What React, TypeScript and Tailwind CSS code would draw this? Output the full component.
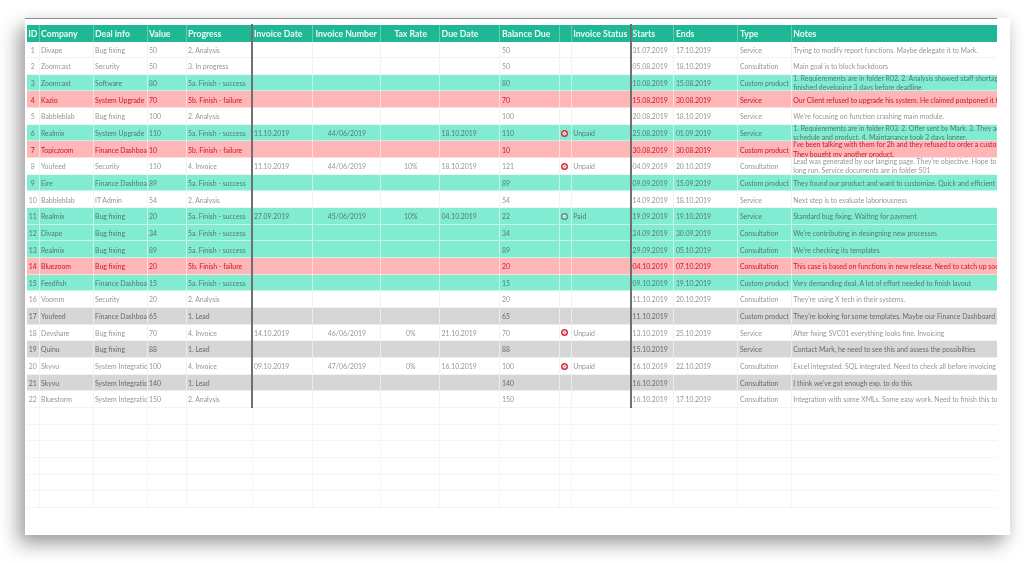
const gridCols =
  'grid grid-cols-[12.5px_54px_54px_39px_66px_60px_68.3px_59.3px_60.3px_60px_11.4px_59.3px_43.3px_64px_53.4px_205.6px]';

type Tone = 'white' | 'green' | 'red' | 'gray';

type Deal = {
  id: number;
  company: string;
  info: string;
  value: number;
  progress: string;
  invDate?: string;
  invNo?: string;
  tax?: string;
  due?: string;
  balance: number;
  status?: 'Unpaid' | 'Paid';
  starts: string;
  ends?: string;
  type: string;
  notes: string;
  notes2?: string;
  tone: Tone;
};

const deals: Deal[] = [
  { id: 1, company: 'Divape', info: 'Bug fixing', value: 50, progress: '2. Analysis', balance: 50, starts: '31.07.2019', ends: '17.10.2019', type: 'Service', notes: 'Trying to modify report functions. Maybe delegate it to Mark.', tone: 'white' },
  { id: 2, company: 'Zoomcast', info: 'Security', value: 50, progress: '3. In progress', balance: 50, starts: '05.08.2019', ends: '18.10.2019', type: 'Consultation', notes: 'Main goal is to block backdoors', tone: 'white' },
  { id: 3, company: 'Zoomcast', info: 'Software', value: 80, progress: '5a. Finish - success', balance: 80, starts: '10.08.2019', ends: '15.08.2019', type: 'Custom product', notes: '1. Requierements are in folder R02. 2. Analysis showed staff shortage. 3. We', notes2: 'finished developing 3 days before deadline', tone: 'green' },
  { id: 4, company: 'Kazio', info: 'System Upgrade', value: 70, progress: '5b. Finish - failure', balance: 70, starts: '15.08.2019', ends: '30.08.2019', type: 'Service', notes: 'Our Client refused to upgrade his system. He claimed postponed it till next year', tone: 'red' },
  { id: 5, company: 'Babbleblab', info: 'Bug fixing', value: 100, progress: '2. Analysis', balance: 100, starts: '20.08.2019', ends: '18.10.2019', type: 'Service', notes: "We're focusing on function crashing main module.", tone: 'white' },
  { id: 6, company: 'Realmix', info: 'System Upgrade', value: 110, progress: '5a. Finish - success', invDate: '11.10.2019', invNo: '44/06/2019', due: '18.10.2019', balance: 110, status: 'Unpaid', starts: '25.08.2019', ends: '01.09.2019', type: 'Service', notes: '1. Requierements are in folder R03. 2. Offer sent by Mark. 3. They accepted', notes2: 'schedule and product. 4. Maintanance took 2 days longer.', tone: 'green' },
  { id: 7, company: 'Topiczoom', info: 'Finance Dashboard', value: 10, progress: '5b. Finish - failure', balance: 10, starts: '30.08.2019', ends: '30.08.2019', type: 'Custom product', notes: "I've been talking with them for 2h and they refused to order a custom product.", notes2: 'They bought my another product.', tone: 'red' },
  { id: 8, company: 'Youfeed', info: 'Security', value: 110, progress: '4. Invoice', invDate: '11.10.2019', invNo: '44/06/2019', tax: '10%', due: '18.10.2019', balance: 121, status: 'Unpaid', starts: '04.09.2019', ends: '20.10.2019', type: 'Consultation', notes: "Lead was generated by our langing page. They're objective. Hope to work in", notes2: 'long run. Service documents are in folder 501', tone: 'white' },
  { id: 9, company: 'Eire', info: 'Finance Dashboard', value: 89, progress: '5a. Finish - success', balance: 89, starts: '09.09.2019', ends: '15.09.2019', type: 'Custom product', notes: 'They found our product and want to customize. Quick and efficient', tone: 'green' },
  { id: 10, company: 'Babbleblab', info: 'IT Admin', value: 54, progress: '2. Analysis', balance: 54, starts: '14.09.2019', ends: '18.10.2019', type: 'Service', notes: 'Next step is to evaluate laboriousness', tone: 'white' },
  { id: 11, company: 'Realmix', info: 'Bug fixing', value: 20, progress: '5a. Finish - success', invDate: '27.09.2019', invNo: '45/06/2019', tax: '10%', due: '04.10.2019', balance: 22, status: 'Paid', starts: '19.09.2019', ends: '19.10.2019', type: 'Service', notes: 'Standard bug fixing. Waiting for payment', tone: 'green' },
  { id: 12, company: 'Divape', info: 'Bug fixing', value: 34, progress: '5a. Finish - success', balance: 34, starts: '24.09.2019', ends: '30.09.2019', type: 'Consultation', notes: "We're contributing in desingning new processes", tone: 'green' },
  { id: 13, company: 'Realmix', info: 'Bug fixing', value: 89, progress: '5a. Finish - success', balance: 89, starts: '29.09.2019', ends: '05.10.2019', type: 'Consultation', notes: "We're checking its templates", tone: 'green' },
  { id: 14, company: 'Bluezoom', info: 'Bug fixing', value: 20, progress: '5b. Finish - failure', balance: 20, starts: '04.10.2019', ends: '07.10.2019', type: 'Consultation', notes: 'This case is based on functions in new release. Need to catch up soon with it', tone: 'red' },
  { id: 15, company: 'Feedfish', info: 'Finance Dashboard', value: 15, progress: '5a. Finish - success', balance: 15, starts: '09.10.2019', ends: '19.10.2019', type: 'Custom product', notes: 'Very demanding deal. A lot of effort needed to finish layout', tone: 'green' },
  { id: 16, company: 'Voomm', info: 'Security', value: 20, progress: '2. Analysis', balance: 20, starts: '11.10.2019', ends: '20.10.2019', type: 'Consultation', notes: "They're using X tech in their systems.", tone: 'white' },
  { id: 17, company: 'Youfeed', info: 'Finance Dashboard', value: 65, progress: '1. Lead', balance: 65, starts: '11.10.2019', type: 'Custom product', notes: "They're looking for some templates. Maybe our Finance Dashboard", tone: 'gray' },
  { id: 18, company: 'Devshare', info: 'Bug fixing', value: 70, progress: '4. Invoice', invDate: '14.10.2019', invNo: '46/06/2019', tax: '0%', due: '21.10.2019', balance: 70, status: 'Unpaid', starts: '13.10.2019', ends: '25.10.2019', type: 'Service', notes: 'After fixing SVC01 everything looks fine. Invoicing', tone: 'white' },
  { id: 19, company: 'Quinu', info: 'Bug fixing', value: 88, progress: '1. Lead', balance: 88, starts: '15.10.2019', type: 'Service', notes: 'Contact Mark, he need to see this and assess the possibilties', tone: 'gray' },
  { id: 20, company: 'Skyvu', info: 'System Integration', value: 100, progress: '4. Invoice', invDate: '09.10.2019', invNo: '47/06/2019', tax: '0%', due: '16.10.2019', balance: 100, status: 'Unpaid', starts: '16.10.2019', ends: '22.10.2019', type: 'Consultation', notes: 'Excel integrated. SQL integrated. Need to check all before invoicing', tone: 'white' },
  { id: 21, company: 'Skyvu', info: 'System Integration', value: 140, progress: '1. Lead', balance: 140, starts: '16.10.2019', type: 'Consultation', notes: "I think we've got enough exp. to do this", tone: 'gray' },
  { id: 22, company: 'Bluestorm', info: 'System Integration', value: 150, progress: '2. Analysis', balance: 150, starts: '16.10.2019', ends: '17.10.2019', type: 'Consultation', notes: 'Integration with some XMLs. Some easy work. Need to finish this today', tone: 'white' },
];

const toneRow: Record<Tone, string> = {
  white: 'bg-white text-[#969696] border-[#f3f3f3]',
  green: 'bg-[#82ecd3] text-[#4f7d70] border-[#c4f5e9]',
  red: 'bg-[#ffb6b6] text-[#c9182c] border-[#ffdcdc]',
  gray: 'bg-[#d6d6d6] text-[#6a6a6a] border-[#ececec]',
};

function Cell({ children, className = '' }: { children?: React.ReactNode; className?: string }) {
  return (
    <div className={`flex items-center overflow-hidden whitespace-nowrap border-r border-b border-inherit pl-[1.5px] pt-[1px] ${className}`}>
      {children}
    </div>
  );
}

function StatusIcon({ paid }: { paid: boolean }) {
  return (
    <svg viewBox="0 0 16 16" className="h-[7px] w-[7px] shrink-0">
      <circle cx="8" cy="8" r="8" fill={paid ? '#5f8c86' : '#d5313f'} />
      <circle cx="8" cy="8" r="4.6" fill="#f4f4f4" />
      {paid ? (
        <path d="M5.8 8.2l1.6 1.6 2.9-3.2" fill="none" stroke="#5f8c86" strokeWidth="1.6" />
      ) : (
        <path d="M6 6l4 4M10 6l-4 4" fill="none" stroke="#d5313f" strokeWidth="1.6" />
      )}
    </svg>
  );
}

function DealRow({ d }: { d: Deal }) {
  return (
    <div className={`${gridCols} h-[16.667px] ${toneRow[d.tone]}`}>
      <Cell className="justify-center !pl-0">{d.id}</Cell>
      <Cell>{d.company}</Cell>
      <Cell>{d.info}</Cell>
      <Cell>{d.value}</Cell>
      <Cell>{d.progress}</Cell>
      <Cell>{d.invDate}</Cell>
      <Cell className="justify-center">{d.invNo}</Cell>
      <Cell className="justify-center">{d.tax}</Cell>
      <Cell>{d.due}</Cell>
      <Cell>{d.balance}</Cell>
      <Cell className="!pl-[1px]">{d.status && <StatusIcon paid={d.status === 'Paid'} />}</Cell>
      <Cell>{d.status}</Cell>
      <Cell>{d.starts}</Cell>
      <Cell>{d.ends}</Cell>
      <Cell>{d.type}</Cell>
      <Cell className="!border-r-0">
        {d.notes2 ? (
          <div className="leading-[9.6px]">
            <div>{d.notes}</div>
            <div>{d.notes2}</div>
          </div>
        ) : (
          d.notes
        )}
      </Cell>
    </div>
  );
}

function HeadCell({ label, className = '' }: { label?: string; className?: string }) {
  return (
    <div className={`flex items-center overflow-hidden whitespace-nowrap border-r border-[#5fcfb5] pl-[1.5px] ${className}`}>
      {label}
    </div>
  );
}

export default function App() {
  return (
    <div className="h-[563px] w-[1024px] overflow-hidden bg-white font-['Lato',sans-serif]">
      <div className="ml-[25px] mt-[18px] h-[517px] w-[985px] bg-white shadow-[-7px_9px_18px_rgba(0,0,0,0.36),3px_2px_14px_rgba(0,0,0,0.07)]">
        <div className="h-px w-[972px] bg-[#8d8d8d]" />
        <div className="relative ml-[2px] mt-[6px] w-[970.3px] text-[6.9px] blur-[0.45px]">
          {/* frozen pane lines */}
          <div className="absolute left-[224.4px] top-[-1px] z-10 h-[384px] w-[2px] bg-[#707070]" />
          <div className="absolute left-[603.2px] top-[-1px] z-10 h-[384px] w-[2px] bg-[#707070]" />

          <div className={`${gridCols} h-[16.5px] bg-[#20b794] text-[8.7px] font-bold text-[#e9fbf6]`}>
            <HeadCell label="ID" className="justify-center !pl-0" />
            <HeadCell label="Company" />
            <HeadCell label="Deal info" />
            <HeadCell label="Value" />
            <HeadCell label="Progress" />
            <HeadCell label="Invoice Date" />
            <HeadCell label="Invoice Number" className="justify-center !pl-0" />
            <HeadCell label="Tax Rate" className="justify-center" />
            <HeadCell label="Due Date" />
            <HeadCell label="Balance Due" />
            <HeadCell />
            <HeadCell label="Invoice Status" />
            <HeadCell label="Starts" />
            <HeadCell label="Ends" />
            <HeadCell label="Type" />
            <HeadCell label="Notes" className="!border-r-0" />
          </div>

          {deals.map((d) => (
            <DealRow key={d.id} d={d} />
          ))}

          {[0, 1, 2, 3, 4, 5].map((i) => (
            <div key={i} className={`${gridCols} h-[16.667px] border-[#f5f5f5]`}>
              {Array.from({ length: 16 }).map((_, c) => (
                <Cell key={c} className={c === 15 ? '!border-r-0' : ''} />
              ))}
            </div>
          ))}
        </div>
      </div>
    </div>
  );
}
